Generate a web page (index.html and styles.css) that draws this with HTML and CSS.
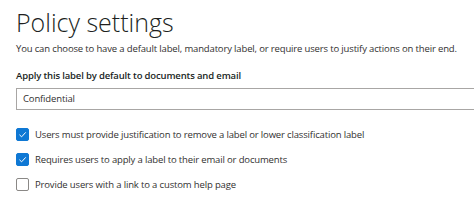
FILE: index.html
```html
<!DOCTYPE html>
<html lang="en">
<head>
    <meta charset="UTF-8">
    <meta name="viewport" content="width=device-width, initial-scale=1.0">
    <title>Policy settings</title>
    <link rel="stylesheet" href="styles.css">
</head>
<body>

<div class="page">
    <h1 class="title">Policy settings</h1>
    <p class="intro">You can choose to have a default label, mandatory label, or require users to justify actions on their end.</p>

    <label class="field-label" for="defaultLabel">Apply this label by default to documents and email</label>
    <div class="select-box" id="defaultLabel">Confidential</div>

    <ul class="options">
        <li class="option">
            <span class="check checked">
                <svg width="9" height="9" viewBox="0 0 10 10"><path d="M1.6 5.3 L4 7.6 L8.6 2.6" fill="none" stroke="#fff" stroke-width="1.1"/></svg>
            </span>
            Users must provide justification to remove a label or lower classification label
        </li>
        <li class="option">
            <span class="check checked">
                <svg width="9" height="9" viewBox="0 0 10 10"><path d="M1.6 5.3 L4 7.6 L8.6 2.6" fill="none" stroke="#fff" stroke-width="1.1"/></svg>
            </span>
            Requires users to apply a label to their email or documents
        </li>
        <li class="option">
            <span class="check"></span>
            Provide users with a link to a custom help page
        </li>
    </ul>
</div>

</body>
</html>
```

FILE: styles.css
```css
body {
    margin: 0;
    background: #ffffff;
    color: #323130;
    font-family: "Open Sans", "Noto Sans", sans-serif;
}
.page {
    padding: 7px 0 0 16px;
}
.title {
    margin: 0;
    font-size: 25px;
    font-weight: 300;
    line-height: 30px;
    color: #201f1e;
}
.intro {
    margin: 5px 0 0 0;
    font-size: 9.5px;
    letter-spacing: -0.15px;
    line-height: 14px;
}
.field-label {
    display: block;
    margin-top: 13px;
    font-size: 9.5px;
    font-weight: 600;
    letter-spacing: -0.15px;
    line-height: 14px;
    color: #201f1e;
}
.select-box {
    margin-top: 5px;
    height: 20px;
    border: 1px solid #a8a6a4;
    border-right: none;
    padding-left: 6px;
    font-size: 9.5px;
    letter-spacing: -0.15px;
    line-height: 20px;
}
.options {
    list-style: none;
    margin: 12px 0 0 0;
    padding: 0;
}
.option {
    display: flex;
    align-items: center;
    height: 25px;
    font-size: 9.5px;
    letter-spacing: -0.15px;
}
.check {
    box-sizing: border-box;
    width: 13px;
    height: 13px;
    border: 1px solid #8a8886;
    border-radius: 2px;
    margin-right: 6px;
    display: flex;
    align-items: center;
    justify-content: center;
}
.check.checked {
    background: #0f78d4;
    border-color: #0f78d4;
}
```
